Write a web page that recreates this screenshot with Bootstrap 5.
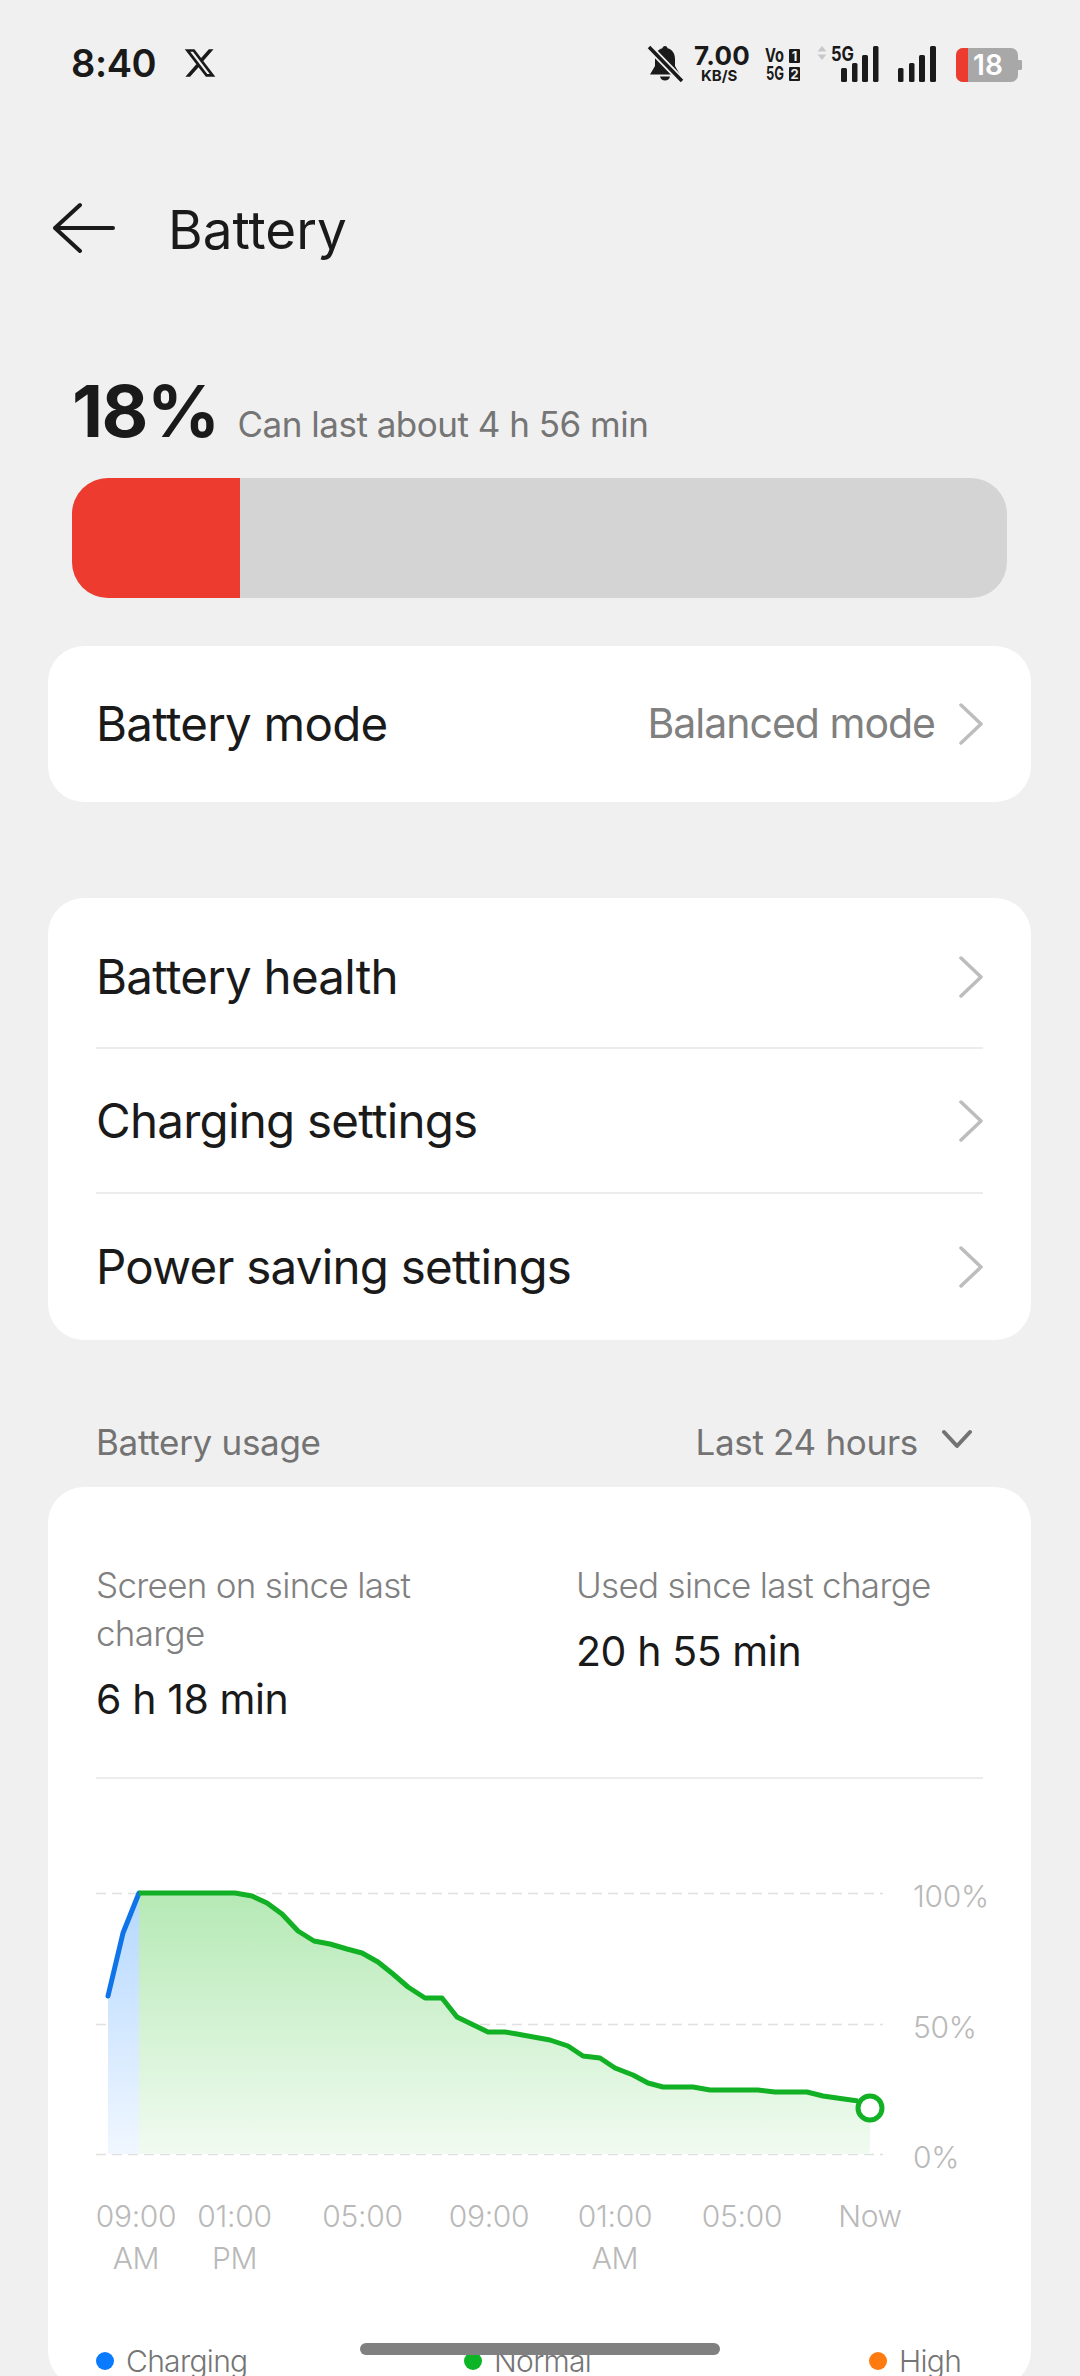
<!doctype html>
<html lang="en">
<head>
<meta charset="utf-8">
<title>Battery</title>
<link href="https://cdn.jsdelivr.net/npm/bootstrap@5.3.0/dist/css/bootstrap.min.css" rel="stylesheet">
<style>
html,body{height:2376px;overflow:hidden}
body{background:#f0f0f0;font-family:"Inter","Noto Sans",sans-serif;color:#1a1a1a;width:1080px}
.phone{position:relative;height:2376px;overflow:hidden}
.sbar{height:86px;padding:40px 0 0 71px}
.clock{font-size:38px;font-weight:600;line-height:1;letter-spacing:-.4px}
.xlogo{width:34px;height:34px;margin-left:27px}
.sicons{position:absolute;left:640px;top:40px}
.topbar{margin-top:77px;height:130px;padding-left:53px}
.topbar h1{font-size:53px;font-weight:400;margin:5px 0 0 53px;letter-spacing:0}
.summary{margin-top:78px;padding-left:72px;height:80px}
.pct{font-size:72px;font-weight:700;line-height:80px;letter-spacing:-1.5px}
.remain{font-size:35px;line-height:48px;color:#757575;margin-left:19px;letter-spacing:-.5px}
.levelbar{margin:27px 73px 0 72px;height:120px;border-radius:36px;background:#d4d4d4;overflow:hidden}
.levelfill{height:100%;background:#ee3b2f}
.panel{margin:0 49px 0 48px;border:0;border-radius:36px;background:#fff}
.first{margin-top:48px;height:156px;padding:0 48px}
.second{margin-top:96px;height:442px;padding:0 48px}
.rowitem{height:145px;font-size:47.5px;letter-spacing:-.75px;color:#1a1a1a;border:0;background:none;padding:0}
.rowitem+.rowitem{border-top:2px solid #ececec}
.second .rowitem:first-child{height:149px;padding-top:8px}
.second .rowitem:last-child{height:148px}
.rowval{font-size:41px;color:#808080;letter-spacing:-1px;margin-right:24px}
.chev{width:24px;height:44px;flex:none}
.usagehead{margin-top:72px;height:60px;padding:0 108px 0 96px;color:#737373;font-size:35px;letter-spacing:-.3px}
.updown{margin-bottom:6px}
.third{margin-top:15px;height:900px;padding:74px 48px 0}
.stats{padding-bottom:50px;border-bottom:2px solid #ececec}
.stata{width:480px;padding-right:60px}
.statlab{font-size:35px;line-height:48px;color:#808080;letter-spacing:-.7px;font-weight:300}
.statval{font-size:41px;line-height:56px;margin-top:14px;letter-spacing:-.4px}
.plot{display:block;width:888px;height:510px;overflow:visible}
.ax{font-family:"Inter",sans-serif;font-size:30px;font-weight:300;fill:#b9b9b9;letter-spacing:-.3px}
.legend{display:grid;grid-template-columns:368px 405px auto;margin-top:50px;font-size:30px;line-height:44px;color:#757575;font-weight:300;letter-spacing:-.7px}
.dot{width:18px;height:18px;border-radius:50%;margin:0 12px 0 0;flex:none}
.dot-c{background:#0a7aff}
.dot-n{background:#0db526}
.dot-h{background:#ff7a0f}
.homepill{position:absolute;left:360px;top:2343px;width:360px;height:12px;border-radius:6px;background:#808080}
</style>
</head>
<body>
<div class="phone">
  <div class="sbar d-flex align-items-center">
    <span class="clock">8:40</span>
    <svg class="xlogo" viewBox="0 0 24 24" fill="#1a1a1a"><path d="M18.244 2.25h3.308l-7.227 8.26 8.502 11.24H16.17l-5.214-6.817L4.99 21.75H1.68l7.73-8.835L1.254 2.25H8.08l4.713 6.231zm-1.161 17.52h1.833L7.084 4.126H5.117z"/></svg>
  </div>
  <svg class="sicons" width="390" height="50" viewBox="640 40 390 50" font-family="Inter,sans-serif">
    <path d="M665 46c1.500 0 2.500 1 2.500 2.300 5 1.300 7.500 5.500 7.500 10.700v7l5 8.500h-30l5-8.500v-7c0-5.200 2.500-9.400 7.500-10.700 0-1.300 1-2.300 2.500-2.300zM660 76.500h10c-.5 2.500-2.500 4-5 4s-4.500-1.500-5-4z" fill="#1a1a1a"/>
    <path d="M649 47l33 34" stroke="#f0f0f0" stroke-width="7"/>
    <path d="M649 47l33 34" stroke="#1a1a1a" stroke-width="3.500"/>
    <text x="694" y="65" font-size="26" font-weight="700" fill="#1a1a1a" letter-spacing=".3">7.00</text>
    <text x="701" y="81" font-size="15" font-weight="700" fill="#1a1a1a">KB/S</text>
    <text x="765" y="62" font-size="19" font-weight="700" fill="#1a1a1a" textLength="19" lengthAdjust="spacingAndGlyphs">Vo</text>
    <text x="766" y="80" font-size="19" font-weight="700" fill="#1a1a1a" textLength="18" lengthAdjust="spacingAndGlyphs">5G</text>
    <rect x="789" y="49" width="11" height="14" rx="1" fill="#1a1a1a"/><rect x="789" y="67" width="11" height="14" rx="1" fill="#1a1a1a"/>
    <text x="794.500" y="61" font-size="13" font-weight="700" fill="#f0f0f0" text-anchor="middle">1</text>
    <text x="794.500" y="79" font-size="13" font-weight="700" fill="#f0f0f0" text-anchor="middle">2</text>
    <path d="M822 46l4.500 5.500h-9zM822 60l4.500-5.500h-9z" fill="#c8c8c8"/>
    <text x="831" y="61" font-size="20" font-weight="700" fill="#1a1a1a" textLength="23" lengthAdjust="spacingAndGlyphs">5G</text>
    <g fill="#1a1a1a">
      <rect x="841" y="68" width="6" height="14" rx="1.500"/><rect x="852" y="63" width="5.500" height="19" rx="1.500"/><rect x="862" y="55" width="6" height="27" rx="1.500"/><rect x="873" y="46" width="5.500" height="36" rx="1.500"/>
      <rect x="898" y="68" width="5.500" height="14" rx="1.500"/><rect x="909" y="63" width="5.500" height="19" rx="1.500"/><rect x="919" y="55" width="6" height="27" rx="1.500"/><rect x="930" y="46" width="6" height="36" rx="1.500"/>
    </g>
    <path d="M1018 60h2.500c1 0 1.500.7 1.500 1.500v7c0 .8-.5 1.500-1.500 1.500H1018z" fill="#a8a8a8"/>
    <rect x="956" y="48" width="62" height="34" rx="7" fill="#a8a8a8"/>
    <path d="M968 48h-5a7 7 0 0 0-7 7v20a7 7 0 0 0 7 7h5z" fill="#ee3b2f"/>
    <text x="988" y="75" font-size="28" font-weight="600" fill="#fff" text-anchor="middle">18</text>
  </svg>

  <div class="topbar d-flex align-items-center">
    <svg width="62" height="52" viewBox="0 0 62 52" fill="none" stroke="#1a1a1a" stroke-width="4" stroke-linecap="round" stroke-linejoin="round"><path d="M27 3L2 26l25 23M2 26h58"/></svg>
    <h1>Battery</h1>
  </div>

  <div class="summary d-flex align-items-baseline">
    <span class="pct">18%</span><span class="remain">Can last about 4 h 56 min</span>
  </div>
  <div class="levelbar"><div class="levelfill" style="width:18%"></div></div>

  <div class="card panel first justify-content-center">
    <div class="d-flex align-items-center justify-content-between">
      <span class="rowitem d-flex align-items-center">Battery mode</span>
      <span class="d-flex align-items-center"><span class="rowval">Balanced mode</span>
      <svg class="chev" viewBox="0 0 24 44" fill="none" stroke="#bdbdbd" stroke-width="3.500" stroke-linecap="round" stroke-linejoin="round"><path d="M2 3l20 19L2 41"/></svg></span>
    </div>
  </div>

  <div class="card panel second">
    <div class="list-group list-group-flush">
      <div class="list-group-item rowitem d-flex align-items-center justify-content-between">Battery health<svg class="chev" viewBox="0 0 24 44" fill="none" stroke="#bdbdbd" stroke-width="3.500" stroke-linecap="round" stroke-linejoin="round"><path d="M2 3l20 19L2 41"/></svg></div>
      <div class="list-group-item rowitem d-flex align-items-center justify-content-between">Charging settings<svg class="chev" viewBox="0 0 24 44" fill="none" stroke="#bdbdbd" stroke-width="3.500" stroke-linecap="round" stroke-linejoin="round"><path d="M2 3l20 19L2 41"/></svg></div>
      <div class="list-group-item rowitem d-flex align-items-center justify-content-between">Power saving settings<svg class="chev" viewBox="0 0 24 44" fill="none" stroke="#bdbdbd" stroke-width="3.500" stroke-linecap="round" stroke-linejoin="round"><path d="M2 3l20 19L2 41"/></svg></div>
    </div>
  </div>

  <div class="usagehead d-flex align-items-center justify-content-between">
    <span>Battery usage</span>
    <span class="d-flex align-items-center gap-4">Last 24 hours
      <svg class="updown" width="30" height="20" viewBox="0 0 30 20" fill="none" stroke="#737373" stroke-width="4" stroke-linecap="round" stroke-linejoin="round"><path d="M2 3l13 14L28 3"/></svg></span>
  </div>

  <div class="card panel third">
    <div class="stats d-flex">
      <div class="stata"><div class="statlab">Screen on since last charge</div><div class="statval">6 h 18 min</div></div>
      <div><div class="statlab">Used since last charge</div><div class="statval">20 h 55 min</div></div>
    </div>
    <svg class="plot" viewBox="96 1779 888 510">
      <defs>
        <linearGradient id="gf" gradientUnits="userSpaceOnUse" x1="0" y1="1893" x2="0" y2="2154"><stop offset="0" stop-color="#b5e9b5"/><stop offset="1" stop-color="#f1fbf1"/></linearGradient>
        <linearGradient id="bf" gradientUnits="userSpaceOnUse" x1="0" y1="1893" x2="0" y2="2154"><stop offset="0" stop-color="#b5d8ff"/><stop offset="1" stop-color="#f0f7ff"/></linearGradient>
      </defs>
      <g stroke="#e0e0e0" stroke-width="1.500" stroke-dasharray="10 6">
        <path d="M96 1893.500H883M96 2024.500H883M96 2154.500H883"/>
      </g>
      <path d="M108 1996L123 1933L139 1893V2154H108Z" fill="url(#bf)"/>
      <path d="M139 1893L235 1893L252 1896L267 1903L282 1914L298 1931L314 1941L330 1944L347 1949L362 1953L378 1962L393 1974L408 1987L425 1998L442 1998L457 2017L488 2032L505 2032L517 2034L550 2040L568 2046L583 2056L600 2058L615 2068L633 2075L648 2083L663 2087L693 2087L710 2090L758 2090L775 2092L807 2092L823 2096L870 2108V2154H139Z" fill="url(#gf)"/>
      <path d="M108 1996L123 1933L139 1893" fill="none" stroke="#0f74e8" stroke-width="5" stroke-linecap="round" stroke-linejoin="round"/>
      <path d="M139 1893L235 1893L252 1896L267 1903L282 1914L298 1931L314 1941L330 1944L347 1949L362 1953L378 1962L393 1974L408 1987L425 1998L442 1998L457 2017L488 2032L505 2032L517 2034L550 2040L568 2046L583 2056L600 2058L615 2068L633 2075L648 2083L663 2087L693 2087L710 2090L758 2090L775 2092L807 2092L823 2096L858 2101" fill="none" stroke="#12b024" stroke-width="5" stroke-linejoin="round"/>
      <circle cx="870" cy="2108" r="12" fill="#fff" stroke="#12b024" stroke-width="5"/>
      <g>
        <text class="ax" x="913" y="1907">100%</text>
        <text class="ax" x="913" y="2038">50%</text>
        <text class="ax" x="913" y="2168">0%</text>
      </g>
      <g text-anchor="middle">
        <text class="ax" x="136" y="2227">09:00</text><text class="ax" x="136" y="2269">AM</text>
        <text class="ax" x="234.500" y="2227">01:00</text><text class="ax" x="234.500" y="2269">PM</text>
        <text class="ax" x="362.500" y="2227">05:00</text>
        <text class="ax" x="489" y="2227">09:00</text>
        <text class="ax" x="615" y="2227">01:00</text><text class="ax" x="615" y="2269">AM</text>
        <text class="ax" x="742" y="2227">05:00</text>
        <text class="ax" x="870" y="2227">Now</text>
      </g>
    </svg>
    <div class="legend">
      <div class="d-flex align-items-center"><span class="dot dot-c"></span>Charging</div>
      <div class="d-flex align-items-center"><span class="dot dot-n"></span>Normal</div>
      <div class="d-flex align-items-center"><span class="dot dot-h"></span>High</div>
    </div>
  </div>
  <div class="homepill"></div>
</div>
</body>
</html>
